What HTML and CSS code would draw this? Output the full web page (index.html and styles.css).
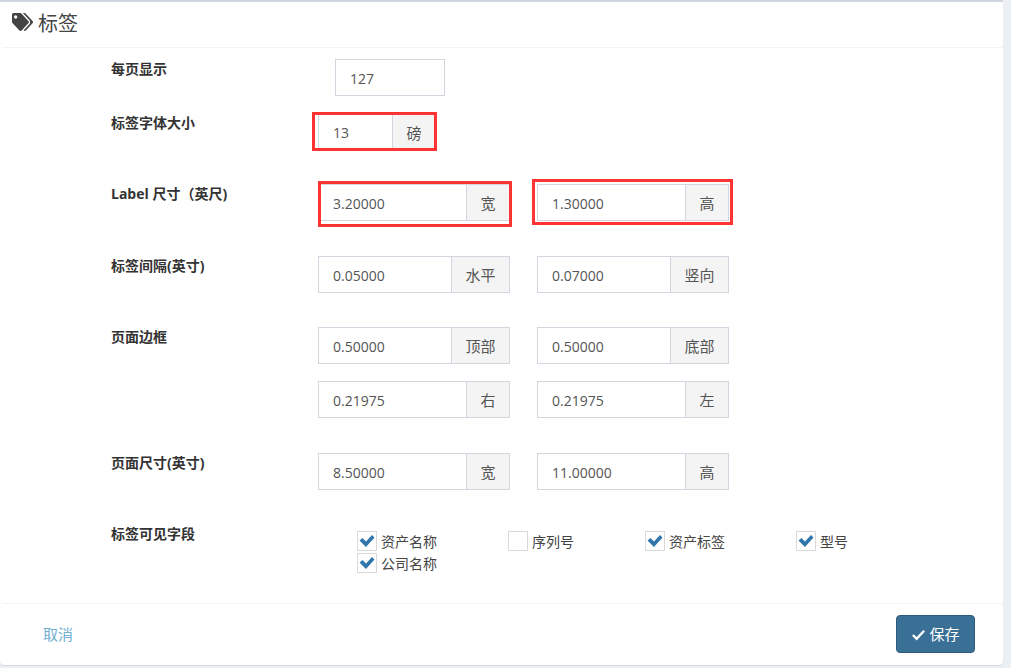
FILE: index.html
```html
<!DOCTYPE html>
<html lang="zh-CN">
<head>
<meta charset="utf-8">
<title>标签</title>
<link rel="stylesheet" href="styles.css">
</head>
<body>
<main class="card">
  <header class="card-head">
    <svg class="tag-icon" viewBox="0 0 640 512" preserveAspectRatio="none" aria-hidden="true"><path d="M497.941 225.941L286.059 14.059A48 48 0 0 0 252.118 0H48C21.49 0 0 21.49 0 48v204.118a48 48 0 0 0 14.059 33.941l211.882 211.882c18.744 18.745 49.136 18.746 67.882 0l204.118-204.118c18.745-18.745 18.745-49.137 0-67.882zM112 160c-26.51 0-48-21.49-48-48s21.49-48 48-48 48 21.49 48 48-21.49 48-48 48zm513.941 133.823L421.823 497.941c-18.745 18.745-49.137 18.745-67.882 0l-.36-.36L527.64 323.522c16.999-16.999 26.36-39.6 26.36-63.64s-9.362-46.641-26.36-63.64L331.397 0h48.721a48 48 0 0 1 33.941 14.059l211.882 211.882c18.745 18.745 18.745 49.137 0 67.882z"/></svg>
    <h1>标签</h1>
  </header>
  <form class="card-body">
    <div class="row row-perpage">
      <label class="row-label">每页显示</label>
      <div class="controls indent"><input class="plain-input" value="127"></div>
    </div>
    <div class="row row-font">
      <label class="row-label label-font">标签字体大小</label>
      <div class="controls">
        <div class="group group-short mark mark-font"><input value="13"><span class="addon">磅</span></div>
      </div>
    </div>
    <div class="row row-wide">
      <label class="row-label">Label 尺寸（英尺)</label>
      <div class="controls">
        <div class="group mark mark-w"><input value="3.20000"><span class="addon">宽</span></div>
        <div class="group mark mark-h"><input value="1.30000"><span class="addon">高</span></div>
      </div>
    </div>
    <div class="row row-gap">
      <label class="row-label">标签间隔(英寸)</label>
      <div class="controls">
        <div class="group"><input value="0.05000"><span class="addon">水平</span></div>
        <div class="group"><input value="0.07000"><span class="addon">竖向</span></div>
      </div>
    </div>
    <div class="row row-wide">
      <label class="row-label">页面边框</label>
      <div class="controls controls-grid">
        <div class="group"><input value="0.50000"><span class="addon">顶部</span></div>
        <div class="group"><input value="0.50000"><span class="addon">底部</span></div>
        <div class="group"><input value="0.21975"><span class="addon">右</span></div>
        <div class="group"><input value="0.21975"><span class="addon">左</span></div>
      </div>
    </div>
    <div class="row row-page">
      <label class="row-label">页面尺寸(英寸)</label>
      <div class="controls">
        <div class="group"><input value="8.50000"><span class="addon">宽</span></div>
        <div class="group"><input value="11.00000"><span class="addon">高</span></div>
      </div>
    </div>
    <div class="row">
      <label class="row-label label-fields">标签可见字段</label>
      <div class="checks">
        <div class="check"><span class="box"><svg viewBox="0 0 18 18"><path d="M1.500 8.500L4.500 6l3.500 3.500L14 3l2.500 2.500L8 15z"/></svg></span>资产名称</div>
        <div class="check"><span class="box"></span>序列号</div>
        <div class="check"><span class="box"><svg viewBox="0 0 18 18"><path d="M1.500 8.500L4.500 6l3.500 3.500L14 3l2.500 2.500L8 15z"/></svg></span>资产标签</div>
        <div class="check"><span class="box"><svg viewBox="0 0 18 18"><path d="M1.500 8.500L4.500 6l3.500 3.500L14 3l2.500 2.500L8 15z"/></svg></span>型号</div>
        <div class="check"><span class="box"><svg viewBox="0 0 18 18"><path d="M1.500 8.500L4.500 6l3.500 3.500L14 3l2.500 2.500L8 15z"/></svg></span>公司名称</div>
      </div>
    </div>
  </form>
  <footer class="card-foot">
    <a class="cancel" href="#">取消</a>
    <button class="save" type="button"><svg viewBox="0 0 16 16" aria-hidden="true"><path d="M2 8.500l4 4 8-8.500"/></svg><span class="save-text">保存</span></button>
  </footer>
</main>
</body>
</html>
```
FILE: styles.css
```css
*, *::after { box-sizing: border-box; }
html, body { margin: 0; height: 100%; }
body {
  background: #ecf0f5;
  font-family: "Open Sans", "Noto Sans CJK SC", sans-serif;
  font-size: 14px;
  color: #333;
  padding-right: 8px;
}
.card {
  height: 665px;
  background: #fff;
  border-top: 2px solid #d2d6de;
  border-radius: 0 0 4px 4px;
  box-shadow: 0 1px 1px rgba(0,0,0,.1);
  display: flex;
  flex-direction: column;
}
.card-head {
  height: 46px;
  margin-left: 2px;
  padding-left: 10px;
  border-bottom: 1px solid #f4f4f4;
  display: flex;
  align-items: center;
  gap: 5px;
}
.tag-icon { width: 21px; height: 18px; fill: #444; margin-top: -6px; }
h1 { margin: -2px 0 0; font-size: 20px; font-weight: 400; color: #444; line-height: 30px; }
.card-body { flex: 1; padding-top: 11px; }
.row { display: flex; padding-left: 111px; }
.row-label { width: 207px; flex: none; font-size: 14px; font-weight: 700; line-height: 20px; color: #333; }
.label-font { margin-top: -2px; }
.label-fields { margin-top: -7px; }
.row-perpage { margin-bottom: 19px; }
.row-font { margin-bottom: 33px; }
.row-wide { margin-bottom: 35px; }
.row-gap { margin-bottom: 34px; }
.row-page { margin-bottom: 41px; }
.controls { display: flex; gap: 27px; }
.controls-grid { display: grid; grid-template-columns: 192px 192px; column-gap: 27px; row-gap: 17px; }
.indent { padding-left: 17px; }
input {
  font: inherit;
  color: #555;
  height: 37px;
  padding: 2px 14px 0;
  border: 1px solid #d2d6de;
  background: #fff;
  border-radius: 0;
  outline: none;
  min-width: 0;
}
.plain-input { width: 110px; }
.group { display: flex; width: 192px; position: relative; }
.group input { flex: 1; border-right: 0; }
.addon {
  height: 37px;
  padding: 0 13.500px;
  display: flex;
  align-items: center;
  background: #f4f4f4;
  border: 1px solid #d2d6de;
  color: #555;
  font-size: 15px;
}
.group-short { width: 118px; margin-top: -1px; }
.group-short input { padding-top: 0; }
.mark::after {
  content: "";
  position: absolute;
  border: 3px solid #ff3333;
  pointer-events: none;
}
.mark-font::after { left: -6px; top: -2px; width: 125px; height: 39px; }
.mark-w::after { left: 0; top: -3px; width: 194px; height: 46px; }
.mark-h::after { left: -5px; top: -5px; width: 201px; height: 46px; }
.checks {
  display: grid;
  grid-template-columns: 151px 137px 151px 151px;
  grid-auto-rows: 22px;
  padding-left: 39px;
  font-size: 14px;
  margin-top: -1px;
}
.check { display: flex; align-items: center; gap: 4px; color: #444; white-space: nowrap; }
.box {
  width: 20px;
  height: 20px;
  border: 1px solid #d9d9d9;
  background: #fff;
  display: flex;
  align-items: center;
  justify-content: center;
}
.box svg { width: 18px; height: 18px; fill: #2f77ab; }
.card-foot {
  height: 62px;
  margin: 0 0 0 2px;
  padding: 11px 28px 11px 41px;
  border-top: 1px solid #f4f4f4;
  display: flex;
  align-items: center;
  justify-content: space-between;
}
.cancel { color: #72afd2; text-decoration: none; font-size: 15px; margin-top: -2px; }
.save {
  width: 79px;
  height: 38px;
  margin-top: -1px;
  background: #3a6f96;
  border: 1px solid #2e5a7c;
  border-radius: 4px;
  color: #fff;
  font: inherit;
  font-size: 15px;
  display: flex;
  align-items: center;
  justify-content: center;
  gap: 3px;
  padding: 0;
}
.save-text { margin-top: -2px; }
.save svg { width: 15px; height: 15px; fill: none; stroke: #fff; stroke-width: 2.500; }
```
